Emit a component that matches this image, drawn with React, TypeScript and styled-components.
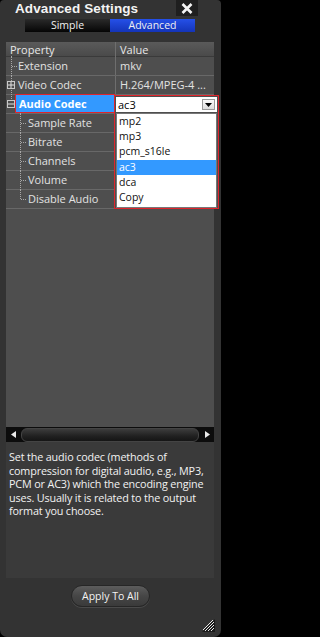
import React from "react";
import styled, { createGlobalStyle, css } from "styled-components";

const GlobalStyle = createGlobalStyle`
  html, body {
    margin: 0;
    padding: 0;
    background: #000;
  }
  * { box-sizing: border-box; }
`;

const UI_FONT = `"Open Sans", "Noto Sans", "DejaVu Sans", sans-serif`;

const Window = styled.div`
  width: 221px;
  height: 637px;
  background: #333333;
  border-radius: 4px 4px 7px 7px;
  display: flex;
  flex-direction: column;
  font-family: ${UI_FONT};
  color: #e6e6e6;
  overflow: hidden;
`;

const TitleBar = styled.div`
  height: 18px;
  display: flex;
  align-items: flex-start;
  justify-content: space-between;
  padding: 0 23px 0 15px;
`;

const Title = styled.div`
  font-family: "Liberation Sans", Arial, sans-serif;
  font-weight: bold;
  font-size: 13.5px;
  line-height: 17px;
  color: #f4f4f4;
  letter-spacing: 0.1px;
`;

const CloseButton = styled.div`
  width: 22px;
  height: 16px;
  background: #1f1f1f;
  display: flex;
  align-items: center;
  justify-content: center;
`;

const Tabs = styled.div`
  display: flex;
  margin: 1px 0 0 25px;
  height: 13px;
`;

const Tab = styled.div<{ $active?: boolean }>`
  width: 85px;
  height: 13px;
  font-size: 10.5px;
  line-height: 13px;
  text-align: center;
  color: #f0f0f0;
  ${(p) =>
    p.$active
      ? css`
          background: linear-gradient(#2550e8, #1434b8);
        `
      : css`
          background: linear-gradient(#2a2a2a, #050505);
        `}
`;

const Grid = styled.div`
  position: relative;
  margin: 10px 7px 0 6px;
  height: 400px;
  background: #4e4e4e;
  display: flex;
  flex-direction: column;
`;

const HeaderRow = styled.div`
  display: grid;
  grid-template-columns: 109px 1fr;
  height: 15px;
  background: linear-gradient(#5a5a5a, #4a4a4a);
  border-bottom: 1px solid #3a3a3a;
  font-size: 11px;
  line-height: 15px;
  color: #e8e8e8;
`;

const HeaderCell = styled.div<{ $divider?: boolean }>`
  padding-left: 4px;
  border-left: ${(p) => (p.$divider ? "1px solid #6e6e6e" : "none")};
`;

const Row = styled.div`
  display: grid;
  grid-template-columns: 109px 1fr;
  height: 19px;
  border-bottom: 1px solid #686868;
  font-size: 11px;
  line-height: 18px;
  color: #e2e2e2;
`;

const NameCell = styled.div<{ $level: number; $selected?: boolean }>`
  position: relative;
  padding-left: ${(p) => (p.$level === 0 ? 12 : 22)}px;
  white-space: nowrap;
  ${(p) =>
    p.$selected &&
    css`
      padding-left: 0;
    `}
`;

const SelectedLabel = styled.div`
  margin-left: 9px;
  height: 19px;
  margin-top: -1px;
  padding-left: 3px;
  background: #3399ff;
  border: 1px solid #e0242c;
  border-right: none;
  color: #fff;
  font-weight: bold;
  line-height: 17px;
`;

const ValueCell = styled.div`
  border-left: 1px solid #6e6e6e;
  padding-left: 4px;
  white-space: nowrap;
  overflow: hidden;
`;

const VLine = styled.span<{ $x: number; $top: number; $bottom: number }>`
  position: absolute;
  left: ${(p) => p.$x}px;
  top: ${(p) => p.$top}px;
  bottom: ${(p) => p.$bottom}px;
  border-left: 1px dotted #a8a8a8;
`;

const HLine = styled.span<{ $x: number; $w: number }>`
  position: absolute;
  left: ${(p) => p.$x}px;
  top: 9px;
  width: ${(p) => p.$w}px;
  border-top: 1px dotted #a8a8a8;
`;

const ExpandBox = styled.span`
  position: absolute;
  left: 1px;
  top: 5px;
  width: 8px;
  height: 8px;
  border: 1px solid #c8c8c8;
  background: #4e4e4e;
  display: flex;
  align-items: center;
  justify-content: center;
`;

const Filler = styled.div`
  flex: 1;
`;

const Scrollbar = styled.div`
  height: 15px;
  background: #0c0c0c;
  display: flex;
  align-items: center;
`;

const ScrollArrow = styled.div`
  width: 14px;
  height: 15px;
  display: flex;
  align-items: center;
  justify-content: center;
`;

const ScrollThumb = styled.div`
  flex: 1;
  height: 14px;
  margin: 0 1px;
  border-radius: 6px;
  background: linear-gradient(#3c3c3c, #202020 60%, #151515);
  border: 1px solid #444;
`;

const Dropdown = styled.div`
  position: absolute;
  left: 108px;
  top: 53px;
  width: 105px;
  height: 114px;
  border: 1px solid #e0242c;
  background: #4e4e4e;
  padding: 1px 1px 0 1px;
  font-size: 10.5px;
  color: #000;
`;

const Combo = styled.div`
  height: 15px;
  background: #fff;
  display: flex;
  align-items: center;
  justify-content: space-between;
  padding: 0 2px 0 2px;
  line-height: 15px;
  font-size: 11px;
`;

const ComboArrow = styled.div`
  width: 13px;
  height: 11px;
  background: linear-gradient(#fafafa, #dcdcdc);
  border: 1px solid #9a9a9a;
  display: flex;
  align-items: center;
  justify-content: center;
`;

const List = styled.div`
  margin-top: 1px;
  background: #fff;
  border: 1px solid #777;
  height: 95px;
`;

const ListItem = styled.div<{ $selected?: boolean }>`
  height: 15.2px;
  line-height: 15px;
  padding-left: 2px;
  background: ${(p) => (p.$selected ? "#3399ff" : "transparent")};
  color: ${(p) => (p.$selected ? "#fff" : "#111")};
`;

const Description = styled.div`
  margin: 0 7px 0 6px;
  height: 136px;
  background: #3a3a3a;
  padding: 8px 0 0 3px;
  font-size: 10.8px;
  letter-spacing: -0.15px;
  line-height: 13.5px;
  color: #f2f2f2;
`;

const Footer = styled.div`
  flex: 1;
  position: relative;
  display: flex;
  justify-content: center;
  padding-top: 7px;
`;

const ApplyButton = styled.div`
  width: 79px;
  height: 22px;
  border-radius: 11px;
  background: linear-gradient(#5c5c5c, #464646 50%, #3a3a3a);
  border: 1px solid #262626;
  box-shadow: 0 1px 0 #4a4a4a;
  font-size: 10.5px;
  line-height: 20px;
  text-align: center;
  color: #f4f4f4;
`;

const Grip = styled.svg`
  position: absolute;
  right: 6px;
  bottom: 5px;
`;

type Prop = {
  name: string;
  value?: string;
  level: number;
  expand?: "+" | "-";
  selected?: boolean;
  last?: boolean;
};

const rows: Prop[] = [
  { name: "Extension", value: "mkv", level: 0 },
  { name: "Video Codec", value: "H.264/MPEG-4 ...", level: 0, expand: "+" },
  { name: "Audio Codec", level: 0, expand: "-", selected: true },
  { name: "Sample Rate", level: 1 },
  { name: "Bitrate", level: 1 },
  { name: "Channels", level: 1 },
  { name: "Volume", level: 1 },
  { name: "Disable Audio", level: 1, last: true },
];

const codecs = ["mp2", "mp3", "pcm_s16le", "ac3", "dca", "Copy"];

const TreeLines: React.FC<{ row: Prop }> = ({ row }) => {
  if (row.level === 0) {
    return (
      <>
        {row.name === "Audio Codec" ? (
          <VLine $x={5} $top={-1} $bottom={14} />
        ) : (
          <VLine $x={5} $top={-1} $bottom={-1} />
        )}
        {row.expand ? (
          <ExpandBox>
            <svg width="6" height="6" viewBox="0 0 6 6">
              <rect x="0" y="2.5" width="6" height="1" fill="#e0e0e0" />
              {row.expand === "+" && (
                <rect x="2.5" y="0" width="1" height="6" fill="#e0e0e0" />
              )}
            </svg>
          </ExpandBox>
        ) : (
          <HLine $x={6} $w={5} />
        )}
      </>
    );
  }
  return (
    <>
      <VLine $x={14} $top={-1} $bottom={row.last ? 9 : -1} />
      <HLine $x={15} $w={5} />
    </>
  );
};

export default function App() {
  return (
    <>
      <GlobalStyle />
      <Window>
        <TitleBar>
          <Title>Advanced Settings</Title>
          <CloseButton>
            <svg width="12" height="11" viewBox="0 0 12 11">
              <path
                d="M1.5 1 L10.5 10 M10.5 1 L1.5 10"
                stroke="#f4f4f4"
                strokeWidth="2.6"
              />
            </svg>
          </CloseButton>
        </TitleBar>
        <Tabs>
          <Tab>Simple</Tab>
          <Tab $active>Advanced</Tab>
        </Tabs>
        <Grid>
          <HeaderRow>
            <HeaderCell>Property</HeaderCell>
            <HeaderCell $divider>Value</HeaderCell>
          </HeaderRow>
          {rows.map((r) => (
            <Row key={r.name}>
              <NameCell $level={r.level} $selected={r.selected}>
                <TreeLines row={r} />
                {r.selected ? <SelectedLabel>{r.name}</SelectedLabel> : r.name}
              </NameCell>
              <ValueCell>{r.value}</ValueCell>
            </Row>
          ))}
          <Filler />
          <Scrollbar>
            <ScrollArrow>
              <svg width="5" height="7" viewBox="0 0 5 7">
                <path d="M5 0 L0 3.5 L5 7 Z" fill="#e8e8e8" />
              </svg>
            </ScrollArrow>
            <ScrollThumb />
            <ScrollArrow>
              <svg width="5" height="7" viewBox="0 0 5 7">
                <path d="M0 0 L5 3.5 L0 7 Z" fill="#e8e8e8" />
              </svg>
            </ScrollArrow>
          </Scrollbar>
          <Dropdown>
            <Combo>
              <span>ac3</span>
              <ComboArrow>
                <svg width="7" height="4" viewBox="0 0 7 4">
                  <path d="M0 0 L7 0 L3.5 4 Z" fill="#000" />
                </svg>
              </ComboArrow>
            </Combo>
            <List>
              {codecs.map((c) => (
                <ListItem key={c} $selected={c === "ac3"}>
                  {c}
                </ListItem>
              ))}
            </List>
          </Dropdown>
        </Grid>
        <Description>
          Set the audio codec (methods of compression for digital audio, e.g.,
          MP3, PCM or AC3) which the encoding engine uses. Usually it is
          related to the output format you choose.
        </Description>
        <Footer>
          <ApplyButton>Apply To All</ApplyButton>
          <Grip width="13" height="13" viewBox="0 0 13 13">
            <path d="M13 0 L13 13 L0 13 Z" fill="#1a1a1a" />
            <path
              d="M12 3 L3 12 M12 6 L6 12 M12 9 L9 12 M11 1 L1 11"
              stroke="#e8e8e8"
              strokeWidth="1"
            />
          </Grip>
        </Footer>
      </Window>
    </>
  );
}
